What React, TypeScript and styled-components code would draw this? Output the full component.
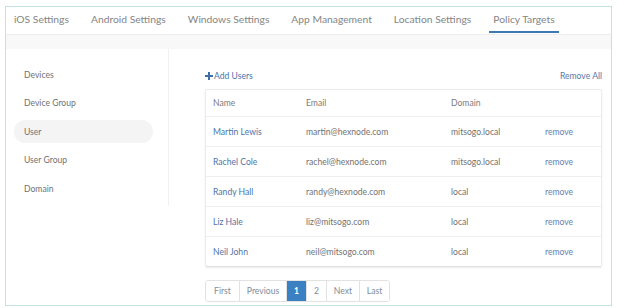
import React from "react";
import styled, { createGlobalStyle } from "styled-components";

const GlobalStyle = createGlobalStyle`
  html, body { margin: 0; padding: 0; background: #ffffff; }
  body { font-family: Lato, "Open Sans", "Liberation Sans", sans-serif; }
  * { box-sizing: border-box; }
`;

const Frame = styled.div`
  margin: 6px 0 0 5px;
  width: 607px;
  height: 300px;
  border: 1px solid #c4e2e6;
  background: #fff;
  display: flex;
  flex-direction: column;
`;

const TabBar = styled.div`
  display: flex;
  height: 28px;
  padding-left: 4px;
  gap: 14px;
  border-bottom: 1px solid #ededed;
`;

const Tab = styled.div<{ $active?: boolean }>`
  display: flex;
  align-items: center;
  white-space: nowrap;
  padding: 0 4px;
  font-size: 10.3px;
  color: #858585;
  border-bottom: 2px solid ${(p) => (p.$active ? "#3d78b4" : "transparent")};
  margin-bottom: 1px;
`;

const Band = styled.div`
  height: 14px;
  background: #f8f8f8;
`;

const Body = styled.div`
  display: flex;
  align-items: flex-start;
`;

const Sidebar = styled.div`
  width: 163px;
  padding: 14px 15px 6px 8px;
  border-right: 1px solid #f1f1f1;
  display: flex;
  flex-direction: column;
  gap: 5.5px;
`;

const SideItem = styled.div<{ $active?: boolean }>`
  height: 23px;
  display: flex;
  align-items: center;
  padding-left: 10px;
  border-radius: 12px;
  font-size: 8.6px;
  color: #727272;
  background: ${(p) => (p.$active ? "#f4f4f4" : "transparent")};
`;

const Main = styled.div`
  flex: 1;
  padding: 20px 9px 0 36px;
  display: flex;
  flex-direction: column;
`;

const Actions = styled.div`
  display: flex;
  justify-content: space-between;
  align-items: center;
  height: 14px;
  font-size: 8.6px;
`;

const AddLink = styled.div`
  display: flex;
  align-items: center;
  gap: 1px;
  color: #4a74ab;
`;

const RemoveAll = styled.div`
  color: #5677aa;
`;

const Card = styled.div`
  margin-top: 6px;
  border: 1px solid #ebebeb;
  border-bottom-color: #e0e0e0;
  box-shadow: 0 1px 2px rgba(0, 0, 0, 0.08);
  border-radius: 2px;
`;

const Row = styled.div<{ $head?: boolean }>`
  display: grid;
  grid-template-columns: 93px 145px 94px 1fr;
  padding-left: 7px;
  height: ${(p) => (p.$head ? "26px" : "30px")};
  align-items: center;
  font-size: 8.6px;
  border-top: ${(p) => (p.$head ? "none" : "1px solid #efefef")};
`;

const HeadCell = styled.div`
  color: #7c7c7c;
`;

const NameCell = styled.div`
  color: #4f74a8;
`;

const TextCell = styled.div`
  color: #727272;
`;

const RemoveCell = styled.div`
  color: #6283b3;
`;

const Pager = styled.div`
  display: flex;
  margin-top: 13px;
  align-self: flex-start;
  border: 1px solid #e2e2e2;
  border-radius: 3px;
  height: 22px;
  overflow: hidden;
`;

const PageBtn = styled.div<{ $active?: boolean; $w: number }>`
  width: ${(p) => p.$w}px;
  display: flex;
  align-items: center;
  justify-content: center;
  font-size: 8.6px;
  color: ${(p) => (p.$active ? "#fff" : "#808c9c")};
  background: ${(p) => (p.$active ? "#3a80c3" : "#fff")};
  font-weight: ${(p) => (p.$active ? 700 : 400)};
  & + & {
    border-left: 1px solid #e2e2e2;
  }
`;

const tabs = [
  "iOS Settings",
  "Android Settings",
  "Windows Settings",
  "App Management",
  "Location Settings",
  "Policy Targets",
];

const side = ["Devices", "Device Group", "User", "User Group", "Domain"];

const users = [
  ["Martin Lewis", "martin@hexnode.com", "mitsogo.local"],
  ["Rachel Cole", "rachel@hexnode.com", "mitsogo.local"],
  ["Randy Hall", "randy@hexnode.com", "local"],
  ["Liz Hale", "liz@mitsogo.com", "local"],
  ["Neil John", "neil@mitsogo.com", "local"],
];

const pages: [string, number, boolean?][] = [
  ["First", 33],
  ["Previous", 47],
  ["1", 20, true],
  ["2", 20],
  ["Next", 33],
  ["Last", 30],
];

export default function App() {
  return (
    <>
      <GlobalStyle />
      <Frame>
        <TabBar>
          {tabs.map((t) => (
            <Tab key={t} $active={t === "Policy Targets"}>
              {t}
            </Tab>
          ))}
        </TabBar>
        <Band />
        <Body>
          <Sidebar>
            {side.map((s) => (
              <SideItem key={s} $active={s === "User"}>
                {s}
              </SideItem>
            ))}
          </Sidebar>
          <Main>
            <Actions>
              <AddLink>
                <svg width="8" height="8" viewBox="0 0 8 8">
                  <path d="M3 0h2v3h3v2H5v3H3V5H0V3h3z" fill="#3f6ea8" />
                </svg>
                Add Users
              </AddLink>
              <RemoveAll>Remove All</RemoveAll>
            </Actions>
            <Card>
              <Row $head>
                <HeadCell>Name</HeadCell>
                <HeadCell>Email</HeadCell>
                <HeadCell>Domain</HeadCell>
                <HeadCell />
              </Row>
              {users.map(([n, e, d]) => (
                <Row key={n}>
                  <NameCell>{n}</NameCell>
                  <TextCell>{e}</TextCell>
                  <TextCell>{d}</TextCell>
                  <RemoveCell>remove</RemoveCell>
                </Row>
              ))}
            </Card>
            <Pager>
              {pages.map(([label, w, active]) => (
                <PageBtn key={label} $w={w} $active={active}>
                  {label}
                </PageBtn>
              ))}
            </Pager>
          </Main>
        </Body>
      </Frame>
    </>
  );
}
